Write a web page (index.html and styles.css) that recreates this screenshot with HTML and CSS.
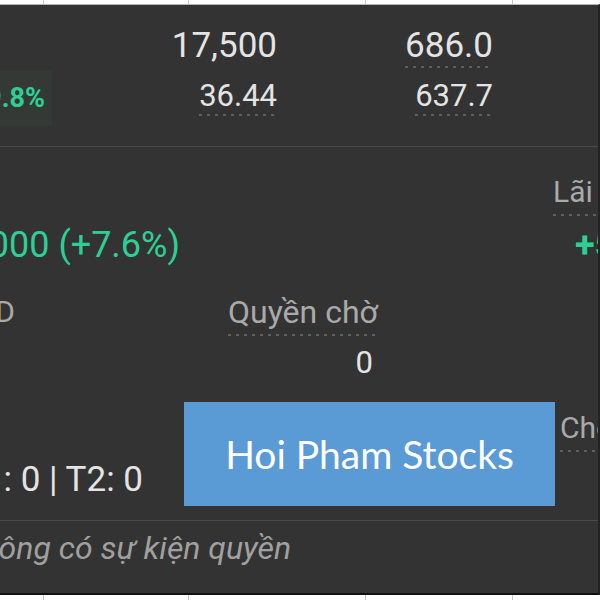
FILE: index.html
```html
<!DOCTYPE html>
<html lang="vi">
<head>
<meta charset="utf-8">
<title>Hoi Pham Stocks</title>
<link rel="stylesheet" href="styles.css">
</head>
<body>
<div class="strip strip-top"><span class="t1"></span><span class="t2"></span><span class="t3"></span><span class="t4"></span></div>
<main class="frame">
  <section class="top">
    <div class="qrow q1">
      <span class="c1"></span>
      <span class="c2 num n-big">17,500</span>
      <span class="c3 num n-big dots">686.0</span>
    </div>
    <div class="qrow q2">
      <span class="c1 chip">+9.8%</span>
      <span class="c2 num n-mid dots">36.44</span>
      <span class="c3 num n-mid dots">637.7</span>
    </div>
  </section>
  <section class="mid">
    <div class="mrow r1">
      <span class="cc label dots">Lãi lỗ</span>
    </div>
    <div class="mrow r2">
      <span class="ca gain">+1,000,000 (+7.6%)</span>
      <span class="cc gain gain-bold pl-22">+5,250,000</span>
    </div>
    <div class="mrow r3">
      <span class="ca label mr-165">Số dư VND</span>
      <span class="cb label label-wide dots">Quyền chờ</span>
    </div>
    <div class="mrow r4">
      <span class="cb num n-mid end mr-3">0</span>
    </div>
    <div class="mrow r5">
      <span class="cc label dots pl-7">Chờ về</span>
    </div>
    <div class="mrow r6">
      <span class="ca num n-t mr-37">T0: 0 | T1: 0 | T2: 0</span>
    </div>
  </section>
  <section class="foot">
    <span class="note">Không có sự kiện quyền</span>
  </section>
  <div class="callout">Hoi Pham Stocks</div>
</main>
<div class="strip strip-bottom"><span class="t1"></span><span class="t2"></span><span class="t3"></span><span class="t4"></span></div>
</body>
</html>
```
FILE: styles.css
```css
* { box-sizing: border-box; }
html, body { margin: 0; padding: 0; background: #ffffff; }
body { width: 600px; height: 600px; overflow: hidden; font-family: Roboto, "Noto Sans", sans-serif; }

.strip { display: flex; height: 4px; background: #fff; }
.strip-bottom { height: 5px; }
.strip span { display: block; height: 100%; border-right: 1px solid #c8c8c8; }
.strip .t1 { width: 44px; }
.strip .t2 { width: 145px; }
.strip .t3 { width: 177px; }
.strip .t4 { width: 147px; }

.frame {
  position: relative;
  height: 591px;
  background: #333333;
  border-top: 1px solid #b4b4b4;
  border-bottom: 2px solid #111111;
  border-right: 2px solid #232323;
  overflow: hidden;
}

.num { color: #e4e4e4; }
.n-big { font-size: 35px; line-height: 35px; }
.n-mid { font-size: 31px; line-height: 31px; }
.n-t { font-size: 35px; line-height: 35px; }
.label { color: #a9a9a9; font-size: 30px; line-height: 30px; }
.label-wide { font-size: 32px; line-height: 30px; }
.gain { color: #2dcf94; font-size: 36px; line-height: 36px; }
.gain-bold { font-weight: 700; }

.dots {
  padding-bottom: 5px;
  background-image: linear-gradient(to right, #5f5f5f 3px, transparent 3px);
  background-size: 8px 2px;
  background-repeat: repeat-x;
  background-position: left bottom;
}

/* top quote block */
.top {
  height: 142px;
  padding-top: 23px;
  border-bottom: 1px solid #4a4a4a;
}
.qrow {
  display: grid;
  grid-template-columns: 348px 229px 216px;
  margin-left: -300px;
  align-items: start;
}
.q1 { height: 52px; }
.qrow .c2, .qrow .c3 { justify-self: end; }
.chip {
  justify-self: end;
  color: #2dcf94;
  font-size: 27px;
  line-height: 27px;
  font-weight: 700;
  margin-top: -9px;
  margin-right: -4px;
  padding: 14px 7px 14px 8px;
  background: #343936;
}

/* middle details */
.mid {
  height: 374px;
  padding-top: 21px;
  border-bottom: 1px solid #4a4a4a;
}
.mrow {
  display: grid;
  grid-template-columns: 480px 48px 148px 177px 1fr;
  grid-template-rows: 48px;
  margin-left: -300px;
  height: 48px;
  align-items: center;
  white-space: nowrap;
}
.mrow .label.dots { padding-top: 9px; padding-bottom: 9px; }
.r2 { margin-top: 5px; }
.r3 { margin-top: 19px; }
.r4 { margin-top: 2px; }
.r5 { margin-top: 18px; }
.r6 { margin-top: 3px; }

.ca { grid-column: 1; justify-self: end; }
.cb { grid-column: 3; justify-self: start; }
.cb.end { justify-self: end; }
.cc { grid-column: 5; justify-self: start; }
.mr-165 { margin-right: 165px; }
.mr-37 { margin-right: 37px; }
.mr-3 { margin-right: 3px; }
.pl-22 { margin-left: 22px; }
.pl-7 { margin-left: 7px; }

/* footer note */
.foot {
  padding-top: 11px;
  margin-left: -38px;
  white-space: nowrap;
}
.note {
  color: #a0a0a0;
  font-style: italic;
  font-size: 32px;
  line-height: 32px;
}

/* overlay shape */
.callout {
  position: absolute;
  left: 184px;
  top: 397px;
  width: 371px;
  height: 104px;
  background: #5b9bd5;
  color: #ffffff;
  font-family: Lato, "Open Sans", sans-serif;
  font-size: 39px;
  display: flex;
  align-items: center;
  justify-content: center;
}
```
